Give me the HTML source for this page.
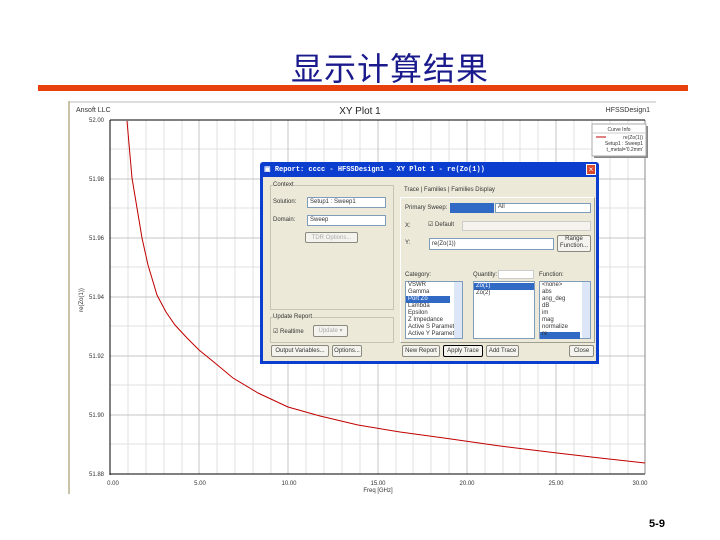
<!DOCTYPE html>
<html><head><meta charset="utf-8"><style>
body{margin:0;width:720px;height:540px;background:#fff;overflow:hidden;position:relative;font-family:"Liberation Sans",sans-serif}
.t{position:absolute;left:0;width:780px;top:44px;text-align:center;font:32px "Noto Sans CJK SC",sans-serif;color:#1a1a8c;letter-spacing:1px}
.bar{position:absolute;left:38px;top:85px;width:650px;height:6px;background:#e8400c}
.d{position:absolute;left:260px;top:162px;width:339px;height:202px;background:#0b3ecf;border-radius:3px 3px 0 0}
.db{position:absolute;left:3px;top:15px;right:3px;bottom:3px;background:#ece9d8}
.d *{box-sizing:border-box}
.a{position:absolute;font-size:6px;color:#333;white-space:nowrap}
.g{position:absolute;border:1px solid #c8c4b4}
.f{position:absolute;background:#fff;border:1px solid #7f9db9}
.b{position:absolute;border:1px solid #8a8a80;background:#f4f3ee;border-radius:2px;font-size:6px;color:#333;text-align:center;line-height:10px}
.s{position:absolute;background:#316ac5}
</style></head><body>
<div class="t">显示计算结果</div>
<div class="bar"></div>
<svg width="720" height="540" style="position:absolute;left:0;top:0">
<rect x="68" y="101" width="588" height="393" fill="#fff"/>
<rect x="68" y="101" width="588" height="2" fill="#ddd"/>
<rect x="68" y="101" width="2" height="393" fill="#c8c2a8"/>
<g stroke="#e0e0e0" stroke-width="1">
<line x1="128" y1="120" x2="128" y2="474"/><line x1="146" y1="120" x2="146" y2="474"/><line x1="164" y1="120" x2="164" y2="474"/><line x1="182" y1="120" x2="182" y2="474"/>
<line x1="217" y1="120" x2="217" y2="474"/><line x1="235" y1="120" x2="235" y2="474"/><line x1="253" y1="120" x2="253" y2="474"/><line x1="271" y1="120" x2="271" y2="474"/>
<line x1="306" y1="120" x2="306" y2="474"/><line x1="324" y1="120" x2="324" y2="474"/><line x1="342" y1="120" x2="342" y2="474"/><line x1="360" y1="120" x2="360" y2="474"/>
<line x1="396" y1="120" x2="396" y2="474"/><line x1="413" y1="120" x2="413" y2="474"/><line x1="431" y1="120" x2="431" y2="474"/><line x1="449" y1="120" x2="449" y2="474"/>
<line x1="485" y1="120" x2="485" y2="474"/><line x1="503" y1="120" x2="503" y2="474"/><line x1="520" y1="120" x2="520" y2="474"/><line x1="538" y1="120" x2="538" y2="474"/>
<line x1="574" y1="120" x2="574" y2="474"/><line x1="592" y1="120" x2="592" y2="474"/><line x1="610" y1="120" x2="610" y2="474"/><line x1="628" y1="120" x2="628" y2="474"/>
<line x1="110" y1="149" x2="645" y2="149"/><line x1="110" y1="208" x2="645" y2="208"/><line x1="110" y1="267" x2="645" y2="267"/><line x1="110" y1="326" x2="645" y2="326"/><line x1="110" y1="385" x2="645" y2="385"/><line x1="110" y1="444" x2="645" y2="444"/>
</g>
<g stroke="#c4c4c4" stroke-width="1">
<line x1="199" y1="120" x2="199" y2="474"/><line x1="288" y1="120" x2="288" y2="474"/><line x1="378" y1="120" x2="378" y2="474"/><line x1="467" y1="120" x2="467" y2="474"/><line x1="556" y1="120" x2="556" y2="474"/>
<line x1="110" y1="179" x2="645" y2="179"/><line x1="110" y1="238" x2="645" y2="238"/><line x1="110" y1="297" x2="645" y2="297"/><line x1="110" y1="356" x2="645" y2="356"/><line x1="110" y1="415" x2="645" y2="415"/>
</g>
<line x1="110" y1="120" x2="110" y2="475" stroke="#000"/>
<line x1="110" y1="474" x2="645" y2="474" stroke="#000"/>
<line x1="645" y1="120" x2="645" y2="474" stroke="#888"/>
<line x1="110" y1="120" x2="645" y2="120" stroke="#000"/>
<polyline fill="none" stroke="#c00000" stroke-width="1" points="127,121 132,178 142,238 148,265 157,295 166,312 175,325 187,338 199,350 215,363 233,378 258,393 288,407 320,416 358,425 400,432 444,438 500,446 557,453 600,458 645,463"/>
<g font-size="6" fill="#333" text-anchor="end">
<text x="104" y="122">52.00</text><text x="104" y="181">51.98</text><text x="104" y="240">51.96</text><text x="104" y="299">51.94</text><text x="104" y="358">51.92</text><text x="104" y="417">51.90</text><text x="104" y="476">51.88</text>
</g>
<g font-size="6" fill="#333" text-anchor="middle">
<text x="113" y="485">0.00</text><text x="200" y="485">5.00</text><text x="289" y="485">10.00</text><text x="378" y="485">15.00</text><text x="467" y="485">20.00</text><text x="556" y="485">25.00</text><text x="640" y="485">30.00</text>
<text x="378" y="492">Freq [GHz]</text>
</g>
<text x="83" y="300" font-size="6" fill="#333" transform="rotate(-90 83 300)" text-anchor="middle">re(Zo(1))</text>
<text x="76" y="112" font-size="7" fill="#333">Ansoft LLC</text>
<text x="360" y="114" font-size="10" fill="#222" text-anchor="middle">XY Plot 1</text>
<text x="650" y="112" font-size="7" fill="#333" text-anchor="end">HFSSDesign1</text>
<rect x="594" y="126" width="54" height="32" fill="#888"/>
<rect x="592" y="124" width="54" height="32" fill="#fff" stroke="#aaa"/>
<line x1="592" y1="133" x2="646" y2="133" stroke="#ccc"/>
<text x="619" y="131" font-size="5" fill="#333" text-anchor="middle">Curve Info</text>
<line x1="596" y1="137" x2="606" y2="137" stroke="#c00000"/>
<text x="643" y="139" font-size="5" fill="#333" text-anchor="end">re(Zo(1))</text>
<text x="643" y="145" font-size="5" fill="#333" text-anchor="end">Setup1 : Sweep1</text>
<text x="643" y="151" font-size="5" fill="#333" text-anchor="end">t_metal='0.2mm'</text>
<text x="657" y="527" font-size="11" font-weight="bold" fill="#000" text-anchor="middle">5-9</text>
</svg>
<div class="d">
<div class="a" style="left:4px;top:3px;color:#fff;font:bold 7px 'Liberation Mono',monospace">▣ Report: cccc - HFSSDesign1 - XY Plot 1 - re(Zo(1))</div>
<div style="position:absolute;right:3px;top:2px;width:10px;height:11px;background:#d8482c;border:1px solid #fff;color:#fff;font-size:8px;line-height:9px;text-align:center">×</div>
<div class="db">
<div class="g" style="left:7px;top:8px;width:124px;height:125px"></div>
<div class="a" style="left:10px;top:5px;background:#ece9d8">Context</div>
<div class="a" style="left:10px;top:22px">Solution:</div>
<div class="f" style="left:44px;top:20px;width:79px;height:11px"><span class="a" style="left:2px;top:1px">Setup1 : Sweep1</span></div>
<div class="a" style="left:10px;top:40px">Domain:</div>
<div class="f" style="left:44px;top:38px;width:79px;height:11px"><span class="a" style="left:2px;top:1px">Sweep</span></div>
<div class="b" style="left:42px;top:55px;width:53px;height:11px;color:#aaa">TDR Options...</div>
<div class="g" style="left:7px;top:140px;width:124px;height:26px"></div>
<div class="a" style="left:10px;top:137px;background:#ece9d8">Update Report</div>
<div class="a" style="left:10px;top:151px">☑ Realtime</div>
<div class="b" style="left:50px;top:148px;width:35px;height:12px;color:#aaa">Update ▾</div>
<div class="b" style="left:8px;top:168px;width:58px;height:12px">Output Variables...</div>
<div class="b" style="left:69px;top:168px;width:30px;height:12px">Options...</div>
<div class="a" style="left:141px;top:10px">Trace | Families | Families Display</div>
<div class="g" style="left:137px;top:20px;width:195px;height:146px;border-color:#fff #a0a090 #a0a090 #fff"></div>
<div class="a" style="left:142px;top:28px">Primary Sweep:</div>
<div class="s" style="left:187px;top:26px;width:44px;height:10px"></div>
<div class="f" style="left:232px;top:26px;width:96px;height:10px"><span class="a" style="left:2px;top:0">All</span></div>
<div class="a" style="left:142px;top:46px">X:</div>
<div class="a" style="left:165px;top:44px">☑ Default</div>
<div class="f" style="left:199px;top:44px;width:129px;height:10px;background:#f4f3ee;border-color:#ccc"></div>
<div class="a" style="left:142px;top:63px">Y:</div>
<div class="f" style="left:166px;top:61px;width:125px;height:12px"><span class="a" style="left:2px;top:2px">re(Zo(1))</span></div>
<div class="b" style="left:294px;top:58px;width:34px;height:17px;line-height:7px">Range<br>Function...</div>
<div class="a" style="left:142px;top:95px">Category:</div>
<div class="a" style="left:210px;top:95px">Quantity:</div>
<div class="f" style="left:235px;top:93px;width:36px;height:9px;border-color:#ccc"></div>
<div class="a" style="left:276px;top:95px">Function:</div>
<div class="f" style="left:142px;top:104px;width:58px;height:58px"><div class="s" style="left:0;top:14px;width:44px;height:7px"></div><div class="a" style="left:2px;top:0;line-height:7px">VSWR<br>Gamma<br><span style="color:#fff">Port Zo</span><br>Lambda<br>Epsilon<br>Z Impedance<br>Active S Parameter<br>Active Y Parameter</div><div style="position:absolute;right:0;top:0;width:8px;height:56px;background:#dde6f7"></div></div>
<div class="f" style="left:210px;top:104px;width:62px;height:58px"><div class="s" style="left:0;top:1px;width:60px;height:7px"></div><div class="a" style="left:2px;top:1px;line-height:7px"><span style="color:#fff">Zo(1)</span><br>Zo(2)</div></div>
<div class="f" style="left:276px;top:104px;width:52px;height:58px"><div class="s" style="left:0;top:50px;width:40px;height:7px"></div><div class="a" style="left:2px;top:0;line-height:7px">&lt;none&gt;<br>abs<br>ang_deg<br>dB<br>im<br>mag<br>normalize<br>re</div><div style="position:absolute;right:0;top:0;width:8px;height:56px;background:#dde6f7"></div></div>
<div class="b" style="left:139px;top:168px;width:38px;height:12px">New Report</div>
<div class="b" style="left:180px;top:168px;width:40px;height:12px;border:1px solid #000">Apply Trace</div>
<div class="b" style="left:223px;top:168px;width:33px;height:12px">Add Trace</div>
<div class="b" style="left:306px;top:168px;width:25px;height:12px">Close</div>
</div></div>
</body></html>
